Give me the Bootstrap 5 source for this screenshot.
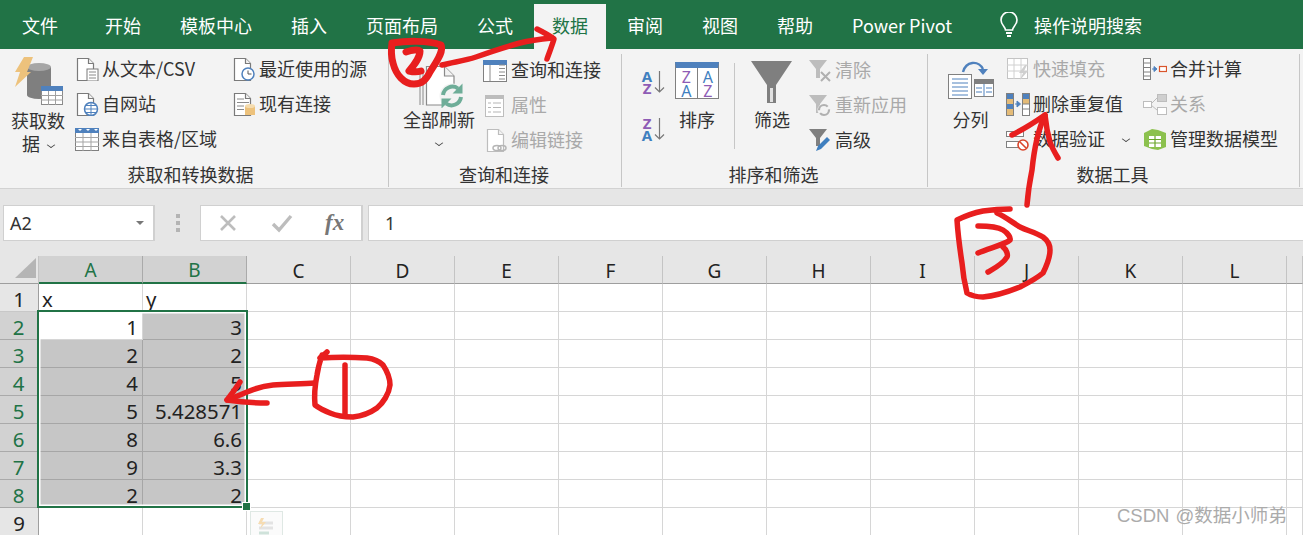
<!DOCTYPE html>
<html lang="zh-CN">
<head>
<meta charset="utf-8">
<title>Excel 数据</title>
<link href="https://cdn.jsdelivr.net/npm/bootstrap@5.3.0/dist/css/bootstrap.min.css" rel="stylesheet">
<style>
html,body{height:535px;overflow:hidden;background:#fff}
body{width:1303px;position:relative;font-family:"Noto Sans CJK SC","Noto Sans",sans-serif;font-size:18px;color:#333}
.tabbar{height:49px;background:#217346;padding:4px 0 0 4px;flex-wrap:nowrap}
.tabbar .tabx{display:block;height:45px;line-height:42px;padding:0 18px;margin-right:3px;color:#fff;white-space:nowrap;border:0;text-decoration:none}
.tabbar .tabx:first-child{margin-right:11px}
.tabbar .tabx.active{background:#f3f3f3;color:#217346}
.tellme{display:flex;align-items:center;color:#fff;height:45px;margin-left:26px;line-height:42px;padding-bottom:3px}
.tellme svg{margin-right:15px}
.ribbon{height:140px;background:#f3f3f3;border-bottom:1px solid #d2d2d2}
.rgroup{height:133px;margin-top:5px;border-right:1px solid #c6c6c6;flex:none}
.rbody{height:108px}
.rlabel{height:25px;line-height:24px;text-align:center;white-space:nowrap}
.g1{width:389px}.g2{width:233px}.g3{width:306px}.g4{width:372px}
.g1 .rlabel{padding-right:7px}
.g2 .rlabel,.g3 .rlabel,.g4 .rlabel{padding-right:2px}
.bigbtn{display:flex;flex-direction:column;align-items:center;flex:none;line-height:23px;text-align:center}
.bigbtn svg{display:block;flex:none}
.bigbtn .tx{white-space:nowrap}
.chev{display:inline-block;width:6px;height:6px;border-right:1px solid #444;border-bottom:1px solid #444;transform:scale(1,.7) rotate(45deg);vertical-align:3px}
.scol{display:flex;flex-direction:column;flex:none;margin-top:-3px}
.g2 .scol,.g3 .scol{margin-top:-2px}
.sitem{height:35px;display:flex;align-items:center;white-space:nowrap;line-height:35px}
.sitem svg{flex:none;margin-right:3px}
.sitem.off{color:#a9a9a9}
.sortstack{width:34px;flex:none;margin-left:19px;padding-top:16px;display:flex;flex-direction:column;gap:23px}
.sortico{display:flex;height:24px;font-family:"Noto Sans",sans-serif;font-weight:700;font-size:15px;line-height:12px}
.sortico .ltr{width:12px;text-align:center}
.sortico svg{margin-left:1px}
.ca{color:#3f7fbf}.cz{color:#8e5cb5}
.sortbig{width:44px;height:37px;border:1px solid #808080;border-top:6px solid #4f81bd;background:#fff;margin:8px 0 9px;display:flex;box-sizing:border-box;font-family:"Noto Sans",sans-serif;font-size:16px;line-height:14px;text-align:center}
.sortbig div{flex:1;padding-top:2px}
.sortbig div+div{border-left:1px solid #808080}
.fbar{height:67px;background:#e6e6e6;padding:16px 0 0 3px}
.fbox{height:36px;background:#fff;border:1px solid #d0d0d0;border-right:2px solid #d0d0d0;flex:none;font-family:"Noto Sans",sans-serif;font-size:18px;line-height:34px}
.namebox{width:152px;padding-left:6px;position:relative}
.namecaret{position:absolute;right:9px;top:15px;width:0;height:0;border-left:4px solid transparent;border-right:4px solid transparent;border-top:4px solid #777}
.fdots{width:45px;flex:none;display:flex;flex-direction:column;align-items:center;justify-content:center;gap:3px;height:36px}
.fdots i{display:block;width:4px;height:4px;background:#b4b4b4}
.fxbox{width:163px;margin-right:5px;display:flex;align-items:center;color:#bdbdbd}
.fxbox svg{flex:none}
.fxlabel{font-family:"Liberation Serif",serif;font-style:italic;font-weight:700;font-size:23px;color:#777;margin-left:32px}
.finput{flex:1;border-right:0;padding-left:16px}
.sheet{table-layout:fixed;width:1303px;border-collapse:separate;border-spacing:0;font-family:"Noto Sans",sans-serif;font-size:20.400px;color:#222}
.sheet th,.sheet td{height:28px;padding:3px 4px 0;overflow:hidden;white-space:nowrap;font-weight:400;line-height:24px;vertical-align:top;box-sizing:border-box}
.sheet td{border-right:1px solid #d6d6d6;border-bottom:1px solid #d6d6d6;text-align:right;padding-right:4px}
.sheet td.txt{text-align:left;padding-left:3px}
.sheet td.sel{background:#c6c6c6;border-color:#a6a6a6}
.sheet th{background:#e6e6e6;text-align:center;padding:3px 0 0;border-right:1px solid #9e9e9e;border-bottom:1px solid #c8c8c8}
.sheet thead th{height:28px;border-bottom:1px solid #9e9e9e;border-right:1px solid #c4c4c4;font-size:19px}
.sheet thead th.hsel,.sheet tbody th.hsel{background:#d2d2d2;color:#217346}
.sheet thead th.hsel{border-bottom:2px solid #217346;border-right-color:#aaa;line-height:23px}
.sheet tbody th.hsel{border-bottom-color:#aaa;border-right:2px solid #217346}
.sheet thead th.corner{padding-top:2px}
.corner svg{display:block;margin-left:15px}
.selbox{position:absolute;left:37px;top:310px;width:211px;height:198px;border:2px solid #217346;box-shadow:inset 0 0 0 1.5px #fff;pointer-events:none}
.selhandle{position:absolute;right:-5px;bottom:-5px;width:7px;height:7px;background:#217346;border:1px solid #fff;box-sizing:content-box}
.qa{position:absolute;left:250px;top:511px;width:33px;height:24px;border:1px solid #dfe8e4;border-bottom:0;background:#fbfbfb}
.wm{position:absolute;left:1117px;top:504px;font-size:18.500px;line-height:24px;color:#ababab;white-space:nowrap;word-spacing:1px;font-family:"Liberation Sans","Noto Sans CJK SC",sans-serif}
.ink{position:absolute;left:0;top:0;pointer-events:none}
.ink path{fill:none;stroke:#e81e1e;stroke-width:5.500;stroke-linecap:round;stroke-linejoin:round}
.ink path.heavy{stroke-width:7}
</style>
</head>
<body>
<svg width="0" height="0" class="position-absolute">
  <symbol id="doc" viewBox="0 0 24 24"><path d="M2.500 1.500h11l5 5v17h-16z" fill="#fff" stroke="#7a7a7a" stroke-width="1.200"/><path d="M13.500 1.500v5h5" fill="#f3f3f3" stroke="#7a7a7a" stroke-width="1.200"/></symbol>
  <symbol id="ghostdoc" viewBox="0 0 24 24"><path d="M4.500 1.500h11l5 5v17h-16z" fill="#fff" stroke="#bdbdbd" stroke-width="1.200"/><path d="M15.500 1.500v5h5" fill="#f3f3f3" stroke="#bdbdbd" stroke-width="1.200"/></symbol>
</svg>

<nav class="nav tabbar">
  <a class="tabx">文件</a><a class="tabx">开始</a><a class="tabx">模板中心</a><a class="tabx">插入</a><a class="tabx">页面布局</a><a class="tabx">公式</a><a class="tabx active">数据</a><a class="tabx">审阅</a><a class="tabx">视图</a><a class="tabx">帮助</a><a class="tabx">Power Pivot</a>
  <div class="tellme">
    <svg width="20" height="26" viewBox="0 0 20 26"><path d="M6.500 18c0-3-4.500-5-4.500-10a8 8 0 0 1 16 0c0 5-4.500 7-4.500 10z" fill="none" stroke="#fff" stroke-width="1.600"/><path d="M7 21h6M8 24h4" stroke="#fff" stroke-width="1.800"/></svg>
    <span>操作说明搜索</span>
  </div>
</nav>

<div class="ribbon d-flex">
  <!-- group 1 -->
  <section class="rgroup g1 d-flex flex-column">
    <div class="rbody d-flex">
      <div class="bigbtn" style="width:62px;margin-left:7px">
        <svg width="54" height="48" viewBox="0 0 54 48" style="margin:3px 4px 3.500px 0">
          <rect x="18" y="10" width="24" height="28" fill="#7f7f7f"/><ellipse cx="30" cy="38" rx="12" ry="4" fill="#7f7f7f"/><ellipse cx="30" cy="10" rx="12" ry="4" fill="#a6a6a6"/>
          <path d="M15 0h9l-6 15h4L6 30l5-15H6z" fill="#edc27c"/>
          <rect x="32.500" y="29.500" width="21" height="18" fill="#fff" stroke="#8a8a8a"/><rect x="32" y="29" width="22" height="5" fill="#4f81bd"/><path d="M39.500 34v14M46.500 34v14M32 38.500h22M32 43h22" stroke="#a0a0a0"/>
        </svg>
        <div class="tx">获取数</div>
        <div class="tx">据 <span class="chev ms-1"></span></div>
      </div>
      <div class="scol" style="margin-left:6px;width:156px">
        <div class="sitem"><svg width="24" height="24"><use href="#doc"/><rect x="12" y="12" width="11" height="12" fill="#fff" stroke="#7a7a7a"/><path d="M14 15h7M14 18h7M14 21h7" stroke="#8a8a8a"/></svg>从文本/CSV</div>
        <div class="sitem"><svg width="24" height="24"><use href="#doc"/><circle cx="16" cy="17" r="6.500" fill="#fff" stroke="#4f81bd" stroke-width="1.500"/><path d="M9.500 17h13M16 10.500v13M11 13.500h10M11 20.500h10" stroke="#4f81bd"/></svg>自网站</div>
        <div class="sitem"><svg width="24" height="24"><rect x=".5" y="1.500" width="23" height="22" fill="#fff" stroke="#808080"/><rect x="0" y="1" width="24" height="5" fill="#4f81bd"/><path d="M8 6v18M16 6v18M0 10.500h24M0 15h24M0 19.500h24" stroke="#a5a5a5"/><path d="M3 2l2 2 2-2zM11 2l2 2 2-2zM19 2l2 2 2-2z" fill="#fff"/></svg>来自表格/区域</div>
      </div>
      <div class="scol" style="margin-left:1px">
        <div class="sitem"><svg width="24" height="24"><use href="#doc"/><circle cx="16" cy="17" r="6" fill="#fff" stroke="#4f81bd" stroke-width="1.500"/><path d="M16 13.500V17h3.500" fill="none" stroke="#555"/></svg>最近使用的源</div>
        <div class="sitem"><svg width="24" height="24"><use href="#doc"/><path d="M5 7h7M5 10.500h12M5 14h7M5 17.500h7" stroke="#8a8a8a"/><rect x="13" y="14" width="10" height="9" fill="#edc27c"/><ellipse cx="18" cy="14" rx="5" ry="2" fill="#f5dcae"/></svg>现有连接</div>
      </div>
    </div>
    <div class="rlabel">获取和转换数据</div>
  </section>
  <!-- group 2 -->
  <section class="rgroup g2 d-flex flex-column">
    <div class="rbody d-flex">
      <div class="bigbtn" style="width:80px;margin-left:10px">
        <svg width="48" height="50" viewBox="0 0 48 50" style="margin-top:4px">
          <path d="M5 13v34M8 11v36" stroke="#8a8a8a" fill="none"/>
          <path d="M11.500 8.500h18l9.500 9.500v29H11.500z" fill="#fff" stroke="#8a8a8a" stroke-width="1.200"/><path d="M29.500 8.500V18H39" fill="#f3f3f3" stroke="#8a8a8a" stroke-width="1.200"/>
          <circle cx="37" cy="38" r="12.500" fill="#f3f3f3"/>
          <path d="M28 37a9.500 9.500 0 0 1 15-6.500M46 39a9.500 9.500 0 0 1-15 6.500" fill="none" stroke="#6ead98" stroke-width="4"/>
          <path d="M47.500 25.500v10h-10zM26.500 50.500v-10h10z" fill="#6ead98"/>
        </svg>
        <div class="tx">全部刷新</div>
        <div class="tx" style="line-height:20px"><span class="chev"></span></div>
      </div>
      <div class="scol" style="margin-left:4px">
        <div class="sitem"><svg width="24" height="24" style="margin-right:4px"><rect x=".5" y="2.500" width="23" height="21" fill="#fff" stroke="#808080"/><rect x="0" y="2" width="24" height="5" fill="#4f81bd"/><path d="M7 7v16M16 7h6M16 10.500h6M16 14h6M16 17.500h6M16 21h6" stroke="#8a8a8a"/></svg>查询和连接</div>
        <div class="sitem off"><svg width="24" height="24" style="margin-right:4px"><rect x="2.500" y="2.500" width="18" height="21" fill="#fff" stroke="#bdbdbd"/><rect x="2" y="2" width="19" height="4" fill="#bdbdbd"/><path d="M5 10h3M10 10h8M5 14.500h3M10 14.500h8M5 19h3M10 19h8" stroke="#b5b5b5"/></svg>属性</div>
        <div class="sitem off"><svg width="24" height="24" style="margin-right:4px"><use href="#ghostdoc"/><ellipse cx="14" cy="20" rx="4" ry="2.500" fill="none" stroke="#b5b5b5" stroke-width="1.500"/><ellipse cx="19" cy="20" rx="4" ry="2.500" fill="none" stroke="#b5b5b5" stroke-width="1.500"/></svg>编辑链接</div>
      </div>
    </div>
    <div class="rlabel">查询和连接</div>
  </section>
  <!-- group 3 -->
  <section class="rgroup g3 d-flex flex-column">
    <div class="rbody d-flex">
      <div class="sortstack">
        <div class="sortico"><div class="ltr"><span class="ca d-block">A</span><span class="cz d-block">Z</span></div><svg width="11" height="24" viewBox="0 0 11 24"><path d="M5.500 1v21M1 17.500l4.500 4.500 4.500-4.500" fill="none" stroke="#777" stroke-width="1.200"/></svg></div>
        <div class="sortico"><div class="ltr"><span class="cz d-block">Z</span><span class="ca d-block">A</span></div><svg width="11" height="24" viewBox="0 0 11 24"><path d="M5.500 1v21M1 17.500l4.500 4.500 4.500-4.500" fill="none" stroke="#777" stroke-width="1.200"/></svg></div>
      </div>
      <div class="bigbtn" style="width:44px">
        <div class="sortbig"><div><span class="cz d-block">Z</span><span class="ca d-block">A</span></div><div><span class="ca d-block">A</span><span class="cz d-block">Z</span></div></div>
        <div class="tx">排序</div>
      </div>
      <div style="width:1px;height:86px;background:#c6c6c6;margin:9px 15px 0 15px;flex:none"></div>
      <div class="bigbtn" style="width:44px">
        <svg width="44" height="45" viewBox="0 0 44 45" style="margin-top:7px;margin-bottom:2px">
          <path d="M1 0h41L26 24v18h-9V24z" fill="#7f7f7f"/><path d="M20 27h3v14h-3z" fill="#e0e0e0"/>
        </svg>
        <div class="tx">筛选</div>
      </div>
      <div class="scol" style="margin-left:14px">
        <div class="sitem off"><svg width="24" height="24"><path d="M1 2h18l-7 9v9h-4v-9z" fill="#bdbdbd"/><path d="M13 14l9 9M22 14l-9 9" stroke="#b0b0b0" stroke-width="2"/></svg>清除</div>
        <div class="sitem off"><svg width="24" height="24"><path d="M1 2h18l-7 9v9h-4v-9z" fill="#bdbdbd"/><circle cx="16" cy="17" r="6.500" fill="#f3f3f3"/><circle cx="16" cy="17" r="5" fill="none" stroke="#b0b0b0" stroke-width="2.200" stroke-dasharray="12 3"/></svg>重新应用</div>
        <div class="sitem"><svg width="24" height="24"><path d="M1 1h18l-7 9v8h-4v-8z" fill="#7f7f7f"/><path d="M8 23l2-5 9-9 3 3-9 9z" fill="#3f7fbf"/></svg>高级</div>
      </div>
    </div>
    <div class="rlabel">排序和筛选</div>
  </section>
  <!-- group 4 -->
  <section class="rgroup g4 d-flex flex-column">
    <div class="rbody d-flex">
      <div class="bigbtn" style="width:45px;margin-left:20px">
        <svg width="46" height="40" viewBox="0 0 46 40" style="margin-top:6px;margin-bottom:8px">
          <rect x=".5" y="14.500" width="23" height="24" fill="#fff" stroke="#808080"/><path d="M4 19h16M4 23h16M4 27h16M4 31h16M4 35h16" stroke="#4f81bd"/>
          <path d="M15 12C18 1 30 0 35 9" fill="none" stroke="#4f81bd" stroke-width="2.400"/><path d="M30 9h10l-5 6z" fill="#4f81bd"/>
          <rect x="26.500" y="19.500" width="19" height="17" fill="#fff" stroke="#808080"/><rect x="26" y="19" width="20" height="5" fill="#7f7f7f"/><path d="M36 24v12M28 28h6M38 28h6M28 32h6M38 32h6" stroke="#4f81bd"/>
        </svg>
        <div class="tx">分列</div>
      </div>
      <div class="scol" style="margin-left:13px;width:137px">
        <div class="sitem off"><svg width="24" height="24"><rect x="1.500" y="1.500" width="20" height="20" fill="#fff" stroke="#c4c4c4"/><path d="M1 8h21M1 14h21M8 2v20M15 2v20" stroke="#d0d0d0"/><path d="M19 8l-6 8h4l-3 7 8-9h-4l3-6z" fill="#cfcfcf"/></svg>快速填充</div>
        <div class="sitem"><svg width="24" height="24"><rect x=".5" y="1.500" width="7" height="22" fill="#fff" stroke="#808080"/><rect x="1" y="2" width="6" height="5" fill="#4f81bd"/><rect x="1" y="7" width="6" height="5" fill="#e4bb77"/><rect x="1" y="12" width="6" height="5" fill="#4f81bd"/><rect x="1" y="17" width="6" height="6" fill="#e4bb77"/><rect x="16.500" y="1.500" width="7" height="22" fill="#fff" stroke="#808080"/><rect x="17" y="2" width="6" height="5" fill="#4f81bd"/><rect x="17" y="7" width="6" height="5" fill="#e4bb77"/><path d="M17 12h6M17 17h6" stroke="#808080"/><path d="M9 12h3M11 9l3.500 3-3.500 3z" fill="#4f81bd" stroke="#4f81bd"/></svg>删除重复值</div>
        <div class="sitem"><svg width="24" height="24"><rect x=".5" y="4.500" width="17" height="5" fill="#fff" stroke="#808080"/><rect x=".5" y="14.500" width="17" height="6" fill="#fff" stroke="#808080"/><circle cx="17" cy="18" r="5" fill="#fff" stroke="#d9452b" stroke-width="1.600"/><path d="M14 15l6 6" stroke="#d9452b" stroke-width="1.600"/></svg>数据验证<span class="chev" style="margin-left:18px"></span></div>
      </div>
      <div class="scol">
        <div class="sitem"><svg width="24" height="24"><rect x=".5" y="1.500" width="7" height="21" fill="#fff" stroke="#808080"/><path d="M1 6h6M1 10.500h6M1 15h6M1 19h6" stroke="#808080"/><path d="M9 12h3M11 9.500l3 2.500-3 2.500z" fill="#4f81bd" stroke="#4f81bd"/><rect x="16.500" y="9.500" width="7" height="5" fill="#fff" stroke="#d9552b" stroke-width="1.200"/></svg>合并计算</div>
        <div class="sitem off"><svg width="24" height="24"><rect x=".5" y="9.500" width="8" height="6" fill="#fff" stroke="#bdbdbd"/><rect x="14.500" y="2.500" width="9" height="7" fill="#cfcfcf" stroke="#bdbdbd"/><rect x="14.500" y="15.500" width="9" height="7" fill="#fff" stroke="#bdbdbd"/><path d="M8 12l6-6M8 13l6 5" stroke="#bdbdbd"/></svg>关系</div>
        <div class="sitem"><svg width="24" height="24"><path d="M1 6l8-4 6 1 8 3v14l-8 3-6-1-8-3z" fill="#8cc14e"/><path d="M6 9h12v11H6z" fill="#fff"/><path d="M12 9v11M6 12.500h12M6 16h12" stroke="#6aa52c" stroke-width="1.200"/></svg>管理数据模型</div>
      </div>
    </div>
    <div class="rlabel">数据工具</div>
  </section>
</div>

<div class="fbar d-flex align-items-start">
  <div class="fbox namebox">A2<span class="namecaret"></span></div>
  <div class="fdots"><i></i><i></i><i></i></div>
  <div class="fbox fxbox">
    <svg width="20" height="20" viewBox="0 0 20 20" style="margin-left:17px"><path d="M3 3l14 14M17 3L3 17" stroke="#bdbdbd" stroke-width="2.600"/></svg>
    <svg width="22" height="20" viewBox="0 0 22 20" style="margin-left:33px"><path d="M2 11l6 6L20 3" fill="none" stroke="#bdbdbd" stroke-width="3.400"/></svg>
    <span class="fxlabel">fx</span>
  </div>
  <div class="fbox finput">1</div>
</div>

<table class="sheet">
  <colgroup><col style="width:39px"><col span="12" style="width:104px"><col style="width:16px"></colgroup>
  <thead><tr>
    <th class="corner"><svg width="21" height="20" viewBox="0 0 21 20"><path d="M21 0v20H0z" fill="#b5b5b5"/></svg></th>
    <th class="hsel">A</th><th class="hsel">B</th><th>C</th><th>D</th><th>E</th><th>F</th><th>G</th><th>H</th><th>I</th><th>J</th><th>K</th><th>L</th><th></th>
  </tr></thead>
  <tbody>
    <tr><th>1</th><td class="txt">x</td><td class="txt">y</td><td></td><td></td><td></td><td></td><td></td><td></td><td></td><td></td><td></td><td></td><td></td></tr>
    <tr><th class="hsel">2</th><td>1</td><td class="sel">3</td><td></td><td></td><td></td><td></td><td></td><td></td><td></td><td></td><td></td><td></td><td></td></tr>
    <tr><th class="hsel">3</th><td class="sel">2</td><td class="sel">2</td><td></td><td></td><td></td><td></td><td></td><td></td><td></td><td></td><td></td><td></td><td></td></tr>
    <tr><th class="hsel">4</th><td class="sel">4</td><td class="sel">5</td><td></td><td></td><td></td><td></td><td></td><td></td><td></td><td></td><td></td><td></td><td></td></tr>
    <tr><th class="hsel">5</th><td class="sel">5</td><td class="sel">5.428571</td><td></td><td></td><td></td><td></td><td></td><td></td><td></td><td></td><td></td><td></td><td></td></tr>
    <tr><th class="hsel">6</th><td class="sel">8</td><td class="sel">6.6</td><td></td><td></td><td></td><td></td><td></td><td></td><td></td><td></td><td></td><td></td><td></td></tr>
    <tr><th class="hsel">7</th><td class="sel">9</td><td class="sel">3.3</td><td></td><td></td><td></td><td></td><td></td><td></td><td></td><td></td><td></td><td></td><td></td></tr>
    <tr><th class="hsel">8</th><td class="sel">2</td><td class="sel">2</td><td></td><td></td><td></td><td></td><td></td><td></td><td></td><td></td><td></td><td></td><td></td></tr>
    <tr><th>9</th><td></td><td></td><td></td><td></td><td></td><td></td><td></td><td></td><td></td><td></td><td></td><td></td><td></td></tr>
  </tbody>
</table>

<div class="selbox"><span class="selhandle"></span></div>
<div class="qa"><svg width="31" height="24" viewBox="0 0 31 24"><path d="M8 7h14M8 12h14" stroke="#e3e3e3" stroke-width="3"/><path d="M8 17h10" stroke="#cfe2da" stroke-width="3"/><path d="M10 2l-3 6h4l-2 5 6-7h-4l2-4z" fill="#f6dcb2"/></svg></div>
<div class="wm">CSDN @数据小师弟</div>

<svg class="ink" width="1303" height="535" viewBox="0 0 1303 535">
  <path class="heavy" d="M392 43C405 41 428 40 441 45C444 52 436 62 430 72C426 80 422 84 414 84C404 84 396 75 393 63C391 56 391 50 392 43"/>
  <path class="heavy" d="M406 52C412 50 418 49 420 51C420 58 414 65 409 71C413 72 418 72 421 71"/>
  <path d="M442 65C453 62 464 61 476 57C490 52 505 47 520 43C532 40 542 39 552 38"/>
  <path d="M537 29C543 32 549 35 554 39C552 46 549 53 547 59"/>
  <path d="M1027 205C1028 192 1030 180 1032 170C1034 150 1038 130 1045 115"/>
  <path d="M1012 135C1022 130 1035 122 1045 115C1046 125 1048 135 1050 142C1052 148 1055 153 1058 158"/>
  <path d="M1010 209C1000 209 990 210 983 211C973 213 965 216 957 220C958 235 960 250 962 263C963 275 965 285 967 293C972 296 977 297 983 297C995 296 1008 292 1020 287C1030 282 1037 278 1043 273C1047 265 1050 258 1050 250C1050 245 1047 240 1043 237C1035 232 1028 231 1020 227C1012 222 1004 216 997 213"/>
  <path d="M978 226C988 226 998 227 1003 230C1008 233 1011 238 1010 240C1006 244 990 248 978 253"/>
  <path d="M1003 247C1007 250 1008 255 1007 257C1003 264 995 268 988 272"/>
  <path d="M327 352C325 354 322 356 320 358C335 357 352 357 367 358C375 359 380 362 383 365C387 371 390 378 390 385C389 394 383 403 377 408C370 413 362 416 353 417C345 417 337 416 330 413C325 411 319 408 315 405C314 395 315 385 317 375C318 368 320 361 322 355"/>
  <path d="M345 365V415"/>
  <path d="M315 383C302 384 287 384 273 385C262 386 254 389 247 392C240 395 233 398 227 400"/>
  <path d="M240 382C236 388 231 395 227 400C240 402 255 403 267 403"/>
</svg>

<script src="https://cdn.jsdelivr.net/npm/bootstrap@5.3.0/dist/js/bootstrap.bundle.min.js"></script>
</body>
</html>
